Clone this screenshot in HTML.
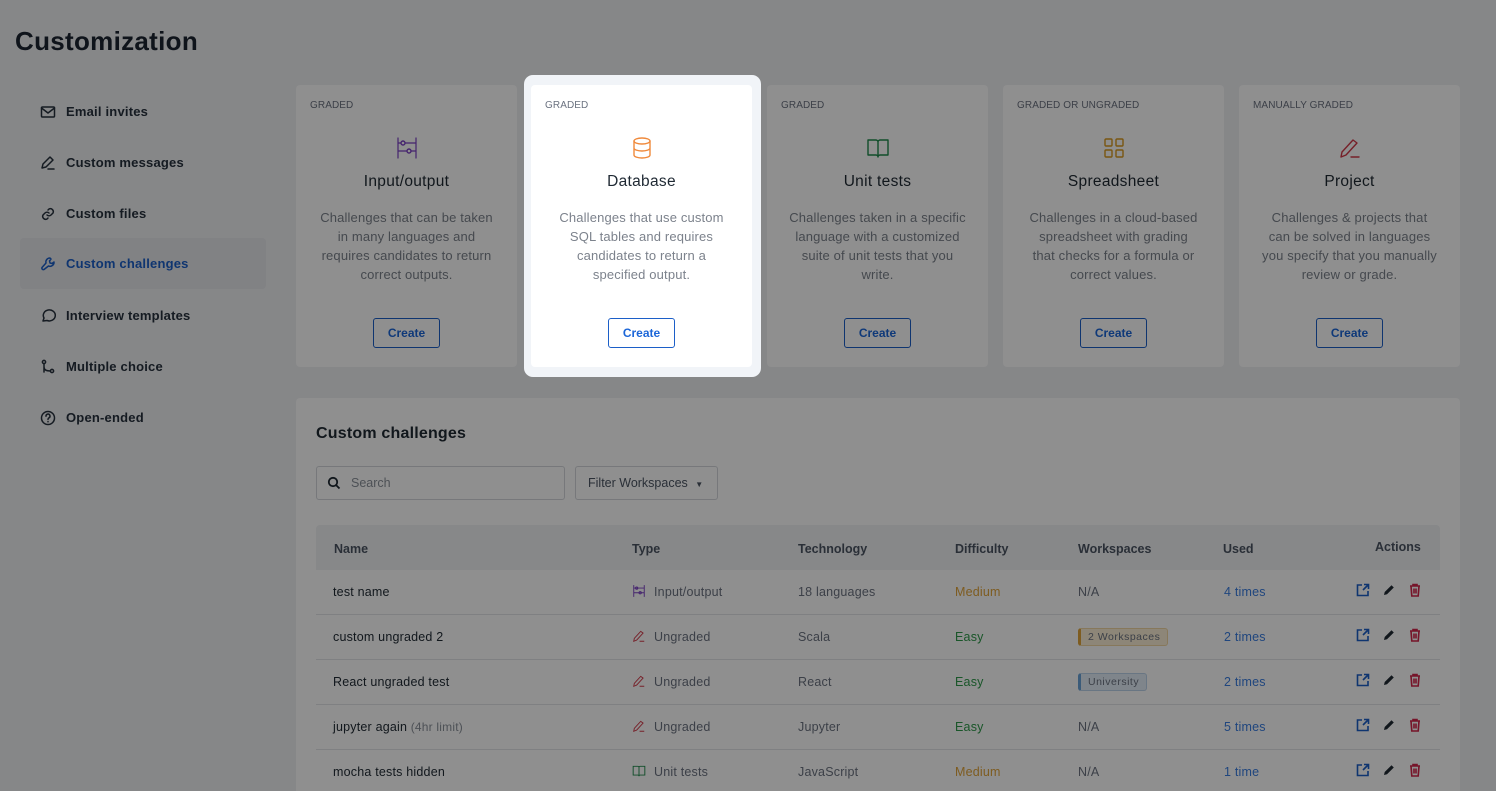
<!DOCTYPE html>
<html><head><meta charset="utf-8"><style>
*{box-sizing:border-box;margin:0;padding:0}
html{overflow:hidden;width:1496px;height:791px}
body{width:1496px;height:791px;overflow:hidden;background:#eff0f2;font-family:"Liberation Sans",sans-serif;position:relative;color:#1f2933}
.abs{position:absolute}
h1{position:absolute;left:15px;top:26px;font-size:26px;font-weight:bold;color:#1b2430;letter-spacing:.3px}
.nav{position:absolute;left:20px;width:246px;height:51px;display:flex;align-items:center;padding-left:20px;font-size:13px;font-weight:bold;color:#27313d;letter-spacing:.2px}
.nav svg{width:16px;height:16px;margin-right:10px;fill:none;stroke:#27313d;stroke-width:1.5;stroke-linecap:round;stroke-linejoin:round}
.nav.act{background:#e6e8ec;border-radius:4px;color:#1c5fc8}
.nav.act svg{stroke:#1c5fc8}
.card{position:absolute;top:85px;width:221px;height:282px;background:#fff;border-radius:4px;text-align:center}
.card .tag{position:absolute;left:14px;top:15px;font-size:10px;color:#6b7280;letter-spacing:.1px}
.card svg{position:absolute;left:99px;top:51px;width:24px;height:24px;fill:none;stroke-width:1.4;stroke-linecap:round;stroke-linejoin:round}
.card .t{position:absolute;left:0;right:0;top:88px;font-size:15.5px;color:#1f2933;letter-spacing:.3px}
.card .d{position:absolute;left:0;right:0;top:123px;font-size:13px;line-height:19px;color:#7c828c;letter-spacing:.15px;white-space:nowrap}
.card .b{position:absolute;left:77px;top:233px;width:67px;height:30px;border:1px solid #1c5fc8;border-radius:3px;color:#1c66d8;font-size:12px;font-weight:bold;line-height:28px}
.panel{position:absolute;left:296px;top:398px;width:1164px;height:393px;background:#fff;border-radius:4px 4px 0 0}
.row{position:absolute;left:316px;width:1124px;height:45px;border-bottom:1px solid #e3e5e8;font-size:12.5px;color:#6b7280;letter-spacing:.2px}
.row span{position:absolute;top:15px}
.ic{position:absolute;top:14px;width:14px;height:14px}
#ov{position:fixed;left:0;top:0;width:1496px;height:791px;background:rgba(0,0,0,.44)}
</style></head><body>
<h1>Customization</h1>
<div class="nav" style="top:86px"><svg viewBox="0 0 16 16"><rect x="1.5" y="3" width="13" height="10" rx="1"/><path d="M1.5 4l6.5 5 6.5-5"/></svg>Email invites</div>
<div class="nav" style="top:137px"><svg viewBox="0 0 16 16"><path d="M2 13l1-4 7-7 3 3-7 7-4 1zM8 14h6"/></svg>Custom messages</div>
<div class="nav" style="top:188px"><svg viewBox="0 0 16 16"><path d="M7 9a3 3 0 004 0l2-2a3 3 0 00-4-4l-1 1M9 7a3 3 0 00-4 0l-2 2a3 3 0 004 4l1-1"/></svg>Custom files</div>
<div class="nav act" style="top:238px"><svg viewBox="0 0 16 16"><path d="M10 2a4 4 0 00-4 5l-4 4.5a1.5 1.5 0 002 2L8.5 10A4 4 0 0014 6l-2 1.5-2-.5-.5-2L11 3z"/></svg>Custom challenges</div>
<div class="nav" style="top:290px"><svg viewBox="0 0 16 16"><path d="M3 13l1-3a6 5.5 0 113 2.5z"/></svg>Interview templates</div>
<div class="nav" style="top:341px"><svg viewBox="0 0 16 16"><circle cx="4" cy="3" r="1.6"/><circle cx="12" cy="12" r="1.6"/><path d="M4 4.6V13M4 8c0 3 3 4 6.4 4"/></svg>Multiple choice</div>
<div class="nav" style="top:392px"><svg viewBox="0 0 16 16"><circle cx="8" cy="8" r="6.5"/><path d="M6 6.2a2 2 0 113 1.6c-.7.4-1 .8-1 1.6M8 11.5v.2"/></svg>Open-ended</div>

<div class="card" style="left:296px"><div class="tag">GRADED</div><svg viewBox="0 0 24 24" stroke="#7b3fc4"><path d="M3 2v20M21 2v20M3 7h18M3 15h18" stroke-width="1.2"/><circle cx="8" cy="7" r="2" fill="#fff"/><circle cx="14" cy="15" r="2" fill="#fff"/></svg><div class="t">Input/output</div><div class="d">Challenges that can be taken<br>in many languages and<br>requires candidates to return<br>correct outputs.</div><div class="b">Create</div></div>
<div class="card" style="left:767px"><div class="tag">GRADED</div><svg viewBox="0 0 24 24" stroke="#1f8a4c"><path d="M2 4h8a2 2 0 012 2v15a2 2 0 00-2-2H2zM22 4h-8a2 2 0 00-2 2v15a2 2 0 012-2h8z"/></svg><div class="t">Unit tests</div><div class="d">Challenges taken in a specific<br>language with a customized<br>suite of unit tests that you<br>write.</div><div class="b">Create</div></div>
<div class="card" style="left:1003px"><div class="tag">GRADED OR UNGRADED</div><svg viewBox="0 0 24 24" stroke="#d99a1e"><rect x="3" y="3" width="7" height="7" rx="1"/><rect x="14" y="3" width="7" height="7" rx="1"/><rect x="3" y="14" width="7" height="7" rx="1"/><rect x="14" y="14" width="7" height="7" rx="1"/></svg><div class="t">Spreadsheet</div><div class="d">Challenges in a cloud-based<br>spreadsheet with grading<br>that checks for a formula or<br>correct values.</div><div class="b">Create</div></div>
<div class="card" style="left:1239px"><div class="tag">MANUALLY GRADED</div><svg viewBox="0 0 24 24" stroke="#d33a4a"><path d="M3 21l1-5 11-12 4 3-11 12-5 2zM13 21h8"/></svg><div class="t">Project</div><div class="d">Challenges &amp; projects that<br>can be solved in languages<br>you specify that you manually<br>review or grade.</div><div class="b">Create</div></div>

<div class="panel"></div>
<div class="abs" style="left:316px;top:425px;font-size:16px;font-weight:bold;color:#1f2933;letter-spacing:.2px">Custom challenges</div>
<div class="abs" style="left:316px;top:466px;width:249px;height:34px;border:1px solid #d4d7dc;border-radius:3px;font-size:12.5px;color:#8a9099;padding:9px 0 0 34px">Search<svg class="abs" style="left:10px;top:9px" width="14" height="14" viewBox="0 0 14 14" fill="none" stroke="#1f2933" stroke-width="1.8"><circle cx="6" cy="6" r="4.2"/><path d="M9 9l3.5 3.5"/></svg></div>
<div class="abs" style="left:575px;top:466px;width:143px;height:34px;border:1px solid #d4d7dc;border-radius:3px;font-size:12.5px;color:#4b5563;padding:9px 0 0 12px">Filter Workspaces <span style="font-size:8px;margin-left:4px">▼</span></div>
<div class="abs" style="left:316px;top:525px;width:1124px;height:45px;background:#f0f2f5;border-radius:4px 4px 0 0;font-size:12.5px;color:#4b5563;font-weight:bold">
<span class="abs" style="left:18px;top:17px">Name</span><span class="abs" style="left:316px;top:17px">Type</span><span class="abs" style="left:482px;top:17px">Technology</span><span class="abs" style="left:639px;top:17px">Difficulty</span><span class="abs" style="left:762px;top:17px">Workspaces</span><span class="abs" style="left:907px;top:17px">Used</span><span class="abs" style="left:1059px;top:15px">Actions</span></div>

<div id="rows"></div>
<script>
var R=[["test name","","io","Input/output","18 languages","Medium","N/A","4 times"],
["custom ungraded 2","","pen","Ungraded","Scala","Easy","2W","2 times"],
["React ungraded test","","pen","Ungraded","React","Easy","U","2 times"],
["jupyter again"," (4hr limit)","pen","Ungraded","Jupyter","Easy","N/A","5 times"],
["mocha tests hidden","","book","Unit tests","JavaScript","Medium","N/A","1 time"]];
var ic={io:'<svg class="ic" style="left:316px" viewBox="0 0 24 24" fill="none" stroke="#7b3fc4" stroke-width="1.6"><path d="M3 2v20M21 2v20M3 7h18M3 15h18"/><circle cx="8" cy="7" r="2"/><circle cx="14" cy="15" r="2"/></svg>',
pen:'<svg class="ic" style="left:316px" viewBox="0 0 24 24" fill="none" stroke="#d33a4a" stroke-width="1.6"><path d="M3 21l1-5 11-12 4 3-11 12-5 2zM13 21h8"/></svg>',
book:'<svg class="ic" style="left:316px" viewBox="0 0 24 24" fill="none" stroke="#1f8a4c" stroke-width="1.6"><path d="M2 4h8a2 2 0 012 2v15a2 2 0 00-2-2H2zM22 4h-8a2 2 0 00-2 2v15a2 2 0 012-2h8z"/></svg>'};
var h='';R.forEach(function(r,i){var y=570+i*45;
var ws=r[6]=="2W"?'<span style="left:762px;top:13px;font-size:10.5px;padding:2px 7px;background:#fbefd6;border:1px solid #f0d7a3;border-left:3px solid #e0a43a;border-radius:3px;color:#6b7280;letter-spacing:.5px">2 Workspaces</span>':r[6]=="U"?'<span style="left:762px;top:13px;font-size:10.5px;padding:2px 7px;background:#e3eef8;border:1px solid #bcd3ea;border-left:3px solid #6aa3d8;border-radius:3px;color:#6b7280;letter-spacing:.5px">University</span>':'<span style="left:762px">'+r[6]+'</span>';
h+='<div class="row" style="top:'+y+'px"><span style="left:17px;color:#1f2933">'+r[0]+'<span style="position:static;color:#8a9099;font-size:12px">'+r[1]+'</span></span>'+ic[r[2]]+'<span style="left:338px">'+r[3]+'</span><span style="left:482px">'+r[4]+'</span><span style="left:639px;color:'+(r[5]=="Easy"?"#2e9a4a":"#e0a43a")+'">'+r[5]+'</span>'+ws+'<span style="left:908px;color:#3a7de0">'+r[7]+'</span>'+
'<svg class="ic" style="left:1040px;top:13px" viewBox="0 0 14 14" fill="none" stroke="#1c5fc8" stroke-width="1.6"><path d="M6 2H1.5v10.5H12V8M8 1.5h4.5V6M12.5 1.5L7 7"/></svg>'+
'<svg class="ic" style="left:1066px;top:13px" viewBox="0 0 14 14"><path d="M2 12l.7-3L9.5 2.2l2.3 2.3L5 11.3z" fill="#1f2933"/></svg>'+
'<svg class="ic" style="left:1092px;top:13px" viewBox="0 0 14 14" fill="none" stroke="#d3244a" stroke-width="1.6"><path d="M2 3h10M5 3V1.5h4V3M3 3l.8 10h6.4L11 3M6 5.5v5M8 5.5v5"/></svg></div>';});
document.getElementById('rows').innerHTML=h;
</script>
<div id="ov"></div>
<div class="abs" style="left:524px;top:75px;width:237px;height:302px;background:#f1f4f8;border-radius:9px"></div>
<div class="card" style="left:531px"><div class="tag">GRADED</div><svg viewBox="0 0 24 24" stroke="#f08a3c"><ellipse cx="12" cy="5" rx="8" ry="3"/><path d="M4 5v14c0 1.7 3.6 3 8 3s8-1.3 8-3V5M4 12c0 1.7 3.6 3 8 3s8-1.3 8-3"/></svg><div class="t">Database</div><div class="d">Challenges that use custom<br>SQL tables and requires<br>candidates to return a<br>specified output.</div><div class="b">Create</div></div>
</body></html>
